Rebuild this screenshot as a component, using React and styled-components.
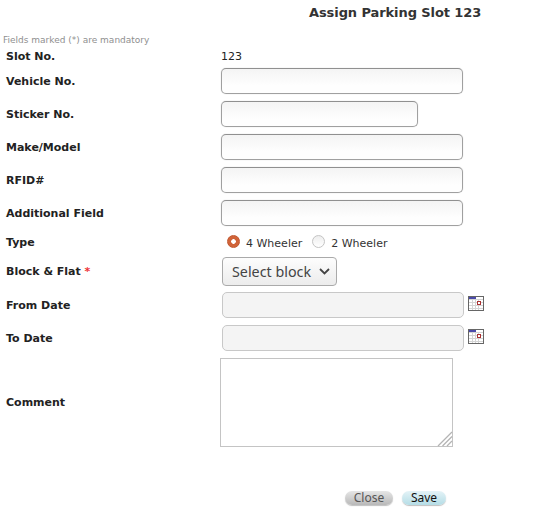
import React from 'react';
import styled, { createGlobalStyle } from 'styled-components';

const Global = createGlobalStyle`
html, body { margin:0; padding:0; background:#fff; }
body { font-family:"DejaVu Sans", Verdana, sans-serif; color:#222; }
`;

const Page = styled.div`
width:553px;
height:532px;
box-sizing:border-box;
padding-top:5px;
overflow:hidden;
`;

const Title = styled.h1`
margin:0;
height:16px;
line-height:16px;
padding-left:309px;
font-size:13px;
letter-spacing:-0.09px;
font-weight:bold;
color:#333;
white-space:nowrap;
`;

const Note = styled.div`
margin-top:13px;
padding-left:3px;
height:12px;
line-height:12px;
font-size:9px;
color:#8f8f8f;
`;

const Form = styled.div`
display:flex;
flex-direction:column;
`;

const Row = styled.div`
display:flex;
align-items:center;
height:${p => p.$h}px;
margin-top:${p => p.$mt || 0}px;
`;

const Label = styled.label`
width:221px;
box-sizing:border-box;
padding-left:6px;
font-size:11px;
font-weight:bold;
color:#222;
`;

const Required = styled.span`
color:#e33;
`;

const Value = styled.span`
font-size:11px;
color:#222;
`;

const Input = styled.input`
box-sizing:border-box;
width:${p => p.$w}px;
height:26px;
padding:0 6px;
border:1px solid #a0a0a0;
border-top-color:#909090;
border-radius:5px;
background:linear-gradient(#f4f4f4, #fefefe 70%);
box-shadow:0 0 1px rgba(0,0,0,0.25);
outline:none;
`;

const DateInput = styled(Input)`
margin-left:1px;
border-color:#c8c8c8;
background:#f4f4f4;
box-shadow:none;
`;

const Radios = styled.div`
display:flex;
align-items:center;
padding-left:6px;
font-size:11px;
color:#333;
position:relative;
top:1px;
`;

const RadioDot = styled.span`
box-sizing:border-box;
display:inline-block;
width:13px;
height:13px;
border-radius:50%;
margin-right:6px;
position:relative;
top:-2px;
border:1px solid ${p => p.$on ? '#c0562e' : '#c4c4c4'};
background:${p => p.$on
    ? 'radial-gradient(circle, #fff 0 2px, #cf6136 2.6px, #d5693f 100%)'
    : 'linear-gradient(#eee,#fff)'};
`;

const RadioText = styled.span`
margin-right:10px;
`;

const Select = styled.div`
box-sizing:border-box;
margin-left:1px;
width:115px;
height:29px;
display:flex;
align-items:center;
justify-content:space-between;
padding:0 6px 0 9px;
border:1px solid #aaa;
border-radius:4px;
background:linear-gradient(#fdfdfd, #ececec);
font-family:"Noto Sans", sans-serif;
font-size:14.3px;
color:#444;
`;

const CalendarIcon = styled.svg`
margin-left:4px;
margin-top:-4px;
`;

const CommentBox = styled.div`
position:relative;
width:233px;
height:89px;
margin-left:-1px;
`;

const Comment = styled.textarea`
box-sizing:border-box;
display:block;
width:100%;
height:100%;
margin:0;
border:1px solid #c4c4c4;
border-radius:0;
background:#fff;
outline:none;
resize:none;
`;

const Grip = styled.svg`
position:absolute;
right:0;
bottom:0;
`;

const Buttons = styled.div`
display:flex;
margin-top:44px;
padding-left:345px;
gap:9px;
`;

const Button = styled.button`
box-sizing:border-box;
width:${p => p.$w}px;
height:14px;
padding:0;
border:none;
border-radius:7px;
font-family:"Noto Sans", sans-serif;
font-size:12px;
line-height:14px;
color:${p => p.$primary ? '#111' : '#555'};
background:${p => p.$primary
    ? 'linear-gradient(#e4f3f7, #b5dde6)'
    : 'linear-gradient(#e6e6e6, #b8b8b8)'};
box-shadow:0 1px 1px rgba(0,0,0,0.25);
`;

function Chevron() {
    return (
        <svg width="11" height="7" viewBox="0 0 11 7">
            <path d="M1 1l4.5 4.5L10 1" fill="none" stroke="#444" strokeWidth="1.8" />
        </svg>
    );
}

function Calendar() {
    return (
        <CalendarIcon width="16" height="15" viewBox="0 0 16 15">
            <rect x="0.5" y="0.5" width="15" height="14" fill="#fff" stroke="#666" />
            <path d="M1 3.5h14M1 6.5h14M1 9.5h14M1 12.5h14M4.5 3v11M7.5 3v11M10.5 3v11" stroke="#d4d4d4" fill="none" />
            <rect x="1" y="1" width="7" height="2" fill="#4a4aa8" />
            <rect x="9.5" y="5.5" width="3" height="3" fill="#fff" stroke="#a33" />
        </CalendarIcon>
    );
}

function ResizeGrip() {
    return (
        <Grip width="16" height="16" viewBox="0 0 16 16">
            <path d="M15 1L1 15M15 5.5L5.5 15M15 10L10 15" stroke="#b4b4b4" strokeWidth="1.3" fill="none" />
        </Grip>
    );
}

export default function App() {
    return (
        <Page>
            <Global />
            <Title>Assign Parking Slot 123</Title>
            <Note>Fields marked (*) are mandatory</Note>
            <Form>
                <Row $h={16} $mt={2}><Label>Slot No.</Label><Value>123</Value></Row>
                <Row $h={26} $mt={4}><Label>Vehicle No.</Label><Input $w={242} /></Row>
                <Row $h={26} $mt={7}><Label>Sticker No.</Label><Input $w={197} /></Row>
                <Row $h={26} $mt={7}><Label>Make/Model</Label><Input $w={242} /></Row>
                <Row $h={26} $mt={7}><Label>RFID#</Label><Input $w={242} /></Row>
                <Row $h={26} $mt={7}><Label>Additional Field</Label><Input $w={242} /></Row>
                <Row $h={18} $mt={7}>
                    <Label>Type</Label>
                    <Radios>
                        <RadioDot $on /><RadioText>4 Wheeler</RadioText>
                        <RadioDot /><RadioText>2 Wheeler</RadioText>
                    </Radios>
                </Row>
                <Row $h={29} $mt={6}>
                    <Label>Block &amp; Flat <Required>*</Required></Label>
                    <Select>Select block <Chevron /></Select>
                </Row>
                <Row $h={26} $mt={6}><Label>From Date</Label><DateInput $w={242} /><Calendar /></Row>
                <Row $h={26} $mt={7}><Label>To Date</Label><DateInput $w={242} /><Calendar /></Row>
                <Row $h={89} $mt={7}>
                    <Label>Comment</Label>
                    <CommentBox><Comment /><ResizeGrip /></CommentBox>
                </Row>
            </Form>
            <Buttons>
                <Button $w={48}>Close</Button>
                <Button $w={44} $primary>Save</Button>
            </Buttons>
        </Page>
    );
}
